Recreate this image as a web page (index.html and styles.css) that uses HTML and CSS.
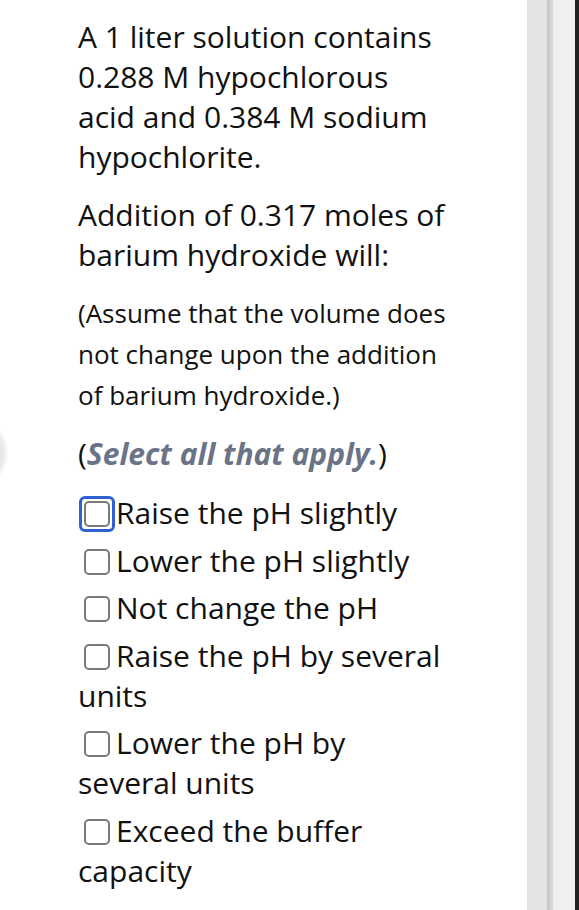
FILE: index.html
```html
<!DOCTYPE html>
<html lang="en">
<head>
<meta charset="utf-8">
<link rel="stylesheet" href="styles.css">
</head>
<body>
<div class="page">
  <div class="edge-shadow"></div>
  <main class="question">
    <p class="q-text">A 1 liter solution contains 0.288 M hypochlorous acid and 0.384 M sodium hypochlorite.</p>
    <p class="q-text">Addition of 0.317 moles of barium hydroxide will:</p>
    <p class="q-note">(Assume that the volume does not change upon the addition of barium hydroxide.)</p>
    <p class="q-hint">(<em>Select all that apply.</em>)</p>
    <div class="options">
      <label class="option"><span class="box focused"></span>Raise the pH slightly</label>
      <label class="option"><span class="box"></span>Lower the pH slightly</label>
      <label class="option"><span class="box"></span>Not change the pH</label>
      <label class="option"><span class="box"></span>Raise the pH by several units</label>
      <label class="option"><span class="box"></span>Lower the pH by several units</label>
      <label class="option"><span class="box"></span>Exceed the buffer capacity</label>
    </div>
  </main>
  <aside class="rail">
    <div class="rail-a"></div>
    <div class="rail-b"></div>
    <div class="rail-c"></div>
    <div class="rail-d"></div>
  </aside>
</div>
</body>
</html>
```
FILE: styles.css
```css
html, body {
  margin: 0;
  padding: 0;
  background: #fff;
}
.page {
  position: relative;
  display: flex;
  width: 579px;
  height: 910px;
  overflow: hidden;
  font-family: "Open Sans", "Noto Sans", sans-serif;
  color: #111;
}
.edge-shadow {
  position: absolute;
  left: -30px;
  top: 425px;
  width: 38px;
  height: 56px;
  border-radius: 50%;
  background: radial-gradient(ellipse at center, rgba(0,0,0,0.18) 0%, rgba(0,0,0,0.08) 55%, rgba(0,0,0,0) 75%);
}
.question {
  flex: none;
  width: 446px;
  padding: 17px 0 0 78px;
  box-sizing: border-box;
}
.q-text {
  margin: 0 0 18px;
  font-size: 30px;
  line-height: 40px;
}
.q-note {
  margin: 0 0 18px;
  font-size: 26px;
  line-height: 41px;
}
.q-hint {
  margin: 0 0 19px;
  font-size: 30px;
  line-height: 40px;
}
.q-hint em {
  font-weight: 700;
  font-style: italic;
  color: #6b7486;
}
.options {
  display: flex;
  flex-direction: column;
  gap: 7.5px;
}
.option {
  display: block;
  font-size: 30px;
  line-height: 40px;
}
.box {
  display: inline-block;
  position: relative;
  width: 22px;
  height: 22px;
  border: 2px solid #7a7a7a;
  border-radius: 5px;
  margin: 0 6px 0 6px;
  vertical-align: -3px;
  background: #fff;
}
.box.focused::after {
  content: "";
  position: absolute;
  left: -7px;
  top: -7px;
  right: -7px;
  bottom: -7px;
  border: 3px solid #2f62d0;
  border-radius: 6px;
}
.rail {
  display: flex;
  width: 52px;
  flex: none;
  margin-left: auto;
}
.rail-a { width: 20px; background: #e3e3e3; }
.rail-b { width: 6px; background: linear-gradient(to right, #c2c2c2, #dcdcdc); }
.rail-c { width: 22px; background: #efefef; }
.rail-d { width: 4px; background: #222; }
```
